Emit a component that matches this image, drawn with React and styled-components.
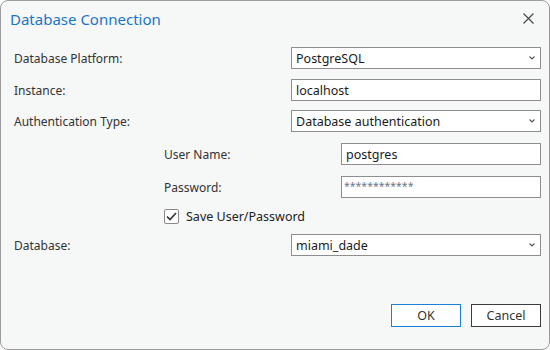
import styled, { createGlobalStyle } from 'styled-components'

const GlobalStyle = createGlobalStyle`
  html, body {
    margin: 0;
    padding: 0;
    background: #ffffff;
  }
  * {
    box-sizing: border-box;
  }
`

const Window = styled.div`
  width: 550px;
  height: 350px;
  border: 1px solid #9c9c9c;
  border-radius: 8px;
  background: #f6f7f7;
  font-family: "Noto Sans", "Open Sans", sans-serif;
  font-size: 12px;
  color: #333;
  display: flex;
  flex-direction: column;
  overflow: hidden;
`

const TitleBar = styled.div`
  height: 35px;
  display: flex;
  align-items: center;
  justify-content: space-between;
  padding: 0 14px 0 9px;
`

const Title = styled.h1`
  margin: 0;
  font-size: 15px;
  font-weight: 400;
  color: #1a75c9;
`

const CloseButton = styled.button`
  border: none;
  background: none;
  padding: 0;
  width: 14px;
  height: 14px;
  display: flex;
  align-items: center;
  justify-content: center;
`

const Form = styled.div`
  display: flex;
  flex-direction: column;
  padding: 0 8px 0 12px;
`

const Row = styled.div`
  display: flex;
  align-items: center;
  height: 22px;
  margin-top: ${({ $mt }) => $mt}px;
  padding-left: ${({ $indent }) => ($indent ? 150 : 0)}px;
`

const Label = styled.label`
  flex: 1;
  padding-left: 1px;
`

const Field = styled.div`
  width: ${({ $w }) => $w}px;
  height: 22px;
  border: 1px solid #8e8e8e;
  background: #fff;
  display: flex;
  align-items: center;
  justify-content: space-between;
  padding: 0 5px 0 4px;
  font-size: 12.5px;
  color: #1b1b1b;
`

const Masked = styled.span`
  font-size: 10.5px;
  color: #6b7789;
  margin-top: -3px;
  margin-left: -2px;
`

const CheckRow = styled.label`
  display: flex;
  align-items: center;
  gap: 7px;
  margin-top: 10px;
  padding-left: 151px;
  height: 16px;
  font-size: 12.5px;
  color: #222;
`

const Box = styled.span`
  width: 15px;
  height: 15px;
  border: 1px solid #8a8a8a;
  border-radius: 2px;
  background: #fff;
  display: flex;
  align-items: center;
  justify-content: center;
`

const Footer = styled.div`
  margin-top: auto;
  display: flex;
  justify-content: flex-end;
  gap: 10px;
  padding: 0 8px 22px 0;
`

const Button = styled.button`
  width: 70px;
  height: 23px;
  background: #fff;
  border: 1px solid ${({ $primary }) => ($primary ? '#1a7fd6' : '#3b3b3b')};
  font-family: inherit;
  font-size: 12.5px;
  color: #333;
  padding: 0;
`

function Chevron() {
  return (
    <svg width="6" height="4" viewBox="0 0 6 4">
      <path d="M0.5 0.5 L3 3 L5.5 0.5" fill="none" stroke="#555" strokeWidth="1.1" />
    </svg>
  )
}

function Select({ value, w }) {
  return (
    <Field $w={w}>
      <span>{value}</span>
      <Chevron />
    </Field>
  )
}

export default function App() {
  return (
    <>
      <GlobalStyle />
      <Window>
        <TitleBar>
          <Title>Database Connection</Title>
          <CloseButton aria-label="Close">
            <svg width="11" height="11" viewBox="0 0 11 11">
              <path d="M0.5 0.5 L10.5 10.5 M10.5 0.5 L0.5 10.5" stroke="#444" strokeWidth="1.1" />
            </svg>
          </CloseButton>
        </TitleBar>
        <Form>
          <Row $mt={11}>
            <Label>Database Platform:</Label>
            <Select value="PostgreSQL" w={250} />
          </Row>
          <Row $mt={10}>
            <Label>Instance:</Label>
            <Field $w={250}>localhost</Field>
          </Row>
          <Row $mt={9}>
            <Label>Authentication Type:</Label>
            <Select value="Database authentication" w={250} />
          </Row>
          <Row $mt={11} $indent>
            <Label>User Name:</Label>
            <Field $w={200}>postgres</Field>
          </Row>
          <Row $mt={11} $indent>
            <Label>Password:</Label>
            <Field $w={200}>
              <Masked>************</Masked>
            </Field>
          </Row>
          <CheckRow>
            <Box>
              <svg width="11" height="9" viewBox="0 0 11 9">
                <path d="M1 4.5 L4 7.5 L10 1" fill="none" stroke="#333" strokeWidth="1.6" />
              </svg>
            </Box>
            Save User/Password
          </CheckRow>
          <Row $mt={10}>
            <Label>Database:</Label>
            <Select value="miami_dade" w={250} />
          </Row>
        </Form>
        <Footer>
          <Button $primary>OK</Button>
          <Button>Cancel</Button>
        </Footer>
      </Window>
    </>
  )
}
